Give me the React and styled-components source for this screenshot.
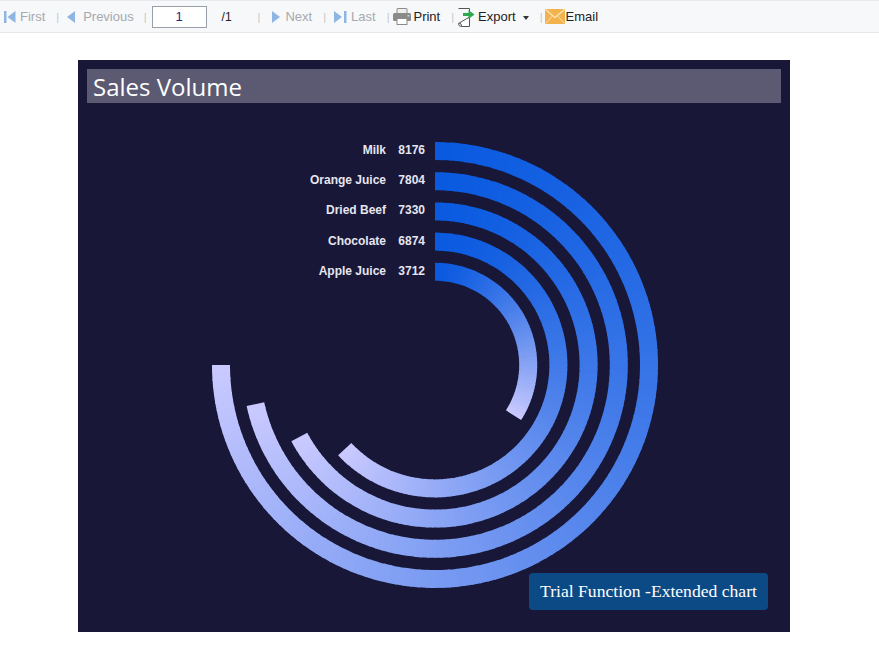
import React from "react";
import styled, { createGlobalStyle } from "styled-components";

const Global = createGlobalStyle`
  html, body { margin: 0; padding: 0; background: #ffffff; }
  body { font-family: "Liberation Sans", Arial, sans-serif; }
`;

const Toolbar = styled.div`
  height: 31px;
  display: flex;
  align-items: center;
  background: #f7f8fa;
  border-top: 1px solid #e6e8ec;
  border-bottom: 1px solid #e6e8ec;
  padding-left: 4px;
  font-family: "Liberation Sans", Arial, sans-serif;
  font-size: 13px;
`;

const Tool = styled.span`
  display: inline-flex;
  align-items: center;
  gap: ${(p) => p.$gap ?? 3}px;
  color: ${(p) => (p.$disabled ? "#a6a9ae" : "#222")};
  white-space: nowrap;
`;

const Sep = styled.span`
  color: #c4c6ca;
  font-size: 11px;
  margin: 0 ${(p) => p.$r ?? 10}px 0 ${(p) => p.$l ?? 10}px;
`;

const PageInput = styled.div`
  width: 55px;
  height: 22px;
  border: 1px solid #9aa0a8;
  background: #fff;
  color: #1a2a8a;
  font-size: 13px;
  display: flex;
  align-items: center;
  justify-content: center;
  box-sizing: border-box;
  margin-left: 4px;
`;

const PageTotal = styled.span`
  color: #222;
  font-size: 12px;
  margin-left: 15px;
  margin-right: 16px;
`;

const Caret = styled.span`
  display: inline-block;
  width: 0;
  height: 0;
  border-left: 3px solid transparent;
  border-right: 3px solid transparent;
  border-top: 4px solid #333;
  margin-left: 4px;
  margin-top: 2px;
`;

const Page = styled.div`
  padding: 27px 0 20px 78px;
`;

const Panel = styled.div`
  position: relative;
  width: 712px;
  height: 572px;
  background: #181737;
  box-sizing: border-box;
  padding: 9px;
  display: flex;
  flex-direction: column;
`;

const TitleBar = styled.div`
  height: 34px;
  background: #5b5a72;
  color: #ffffff;
  font-family: "Open Sans", "Noto Sans", sans-serif;
  font-size: 24px;
  display: flex;
  align-items: center;
  padding-left: 6px;
  flex: none;
`;

const ChartArea = styled.div`
  flex: 1;
`;

const Badge = styled.div`
  position: absolute;
  right: 22px;
  bottom: 22px;
  width: 239px;
  height: 37px;
  border-radius: 4px;
  background: #0c4a86;
  color: #ffffff;
  font-family: "Liberation Serif", "Times New Roman", serif;
  font-size: 17.6px;
  display: flex;
  align-items: center;
  justify-content: center;
`;

const data = [
  { name: "Milk", value: 8176 },
  { name: "Orange Juice", value: 7804 },
  { name: "Dried Beef", value: 7330 },
  { name: "Chocolate", value: 6874 },
  { name: "Apple Juice", value: 3712 },
];

const CX = 348;
const CY = 262;
const MAXV = 8176;
const START = [10, 90, 224];
const END = [202, 202, 255];

function pt(r, deg) {
  const a = (deg * Math.PI) / 180;
  return [CX + r * Math.sin(a), CY - r * Math.cos(a)];
}

function lerp(t) {
  const k = Math.pow(t, 1.35);
  const c = START.map((s, i) => Math.round(s + (END[i] - s) * k));
  return `rgb(${c[0]},${c[1]},${c[2]})`;
}

function Ring({ r, angle }) {
  const n = Math.max(8, Math.ceil(angle / 2));
  const step = angle / n;
  const segs = [];
  for (let i = 0; i < n; i++) {
    const a0 = i * step;
    const a1 = Math.min(angle, (i + 1) * step + (i < n - 1 ? 0.4 : 0));
    const [x0, y0] = pt(r, a0);
    const [x1, y1] = pt(r, a1);
    segs.push(
      <path
        key={i}
        d={`M${x0.toFixed(2)},${y0.toFixed(2)} A${r},${r} 0 0 1 ${x1.toFixed(2)},${y1.toFixed(2)}`}
        stroke={lerp((i + 0.5) / n)}
        strokeWidth="18"
        fill="none"
        strokeLinecap="butt"
      />
    );
  }
  return <g>{segs}</g>;
}

function Chart() {
  return (
    <svg width="694" height="529" viewBox="0 0 694 529">
      {data.map((d, i) => {
        const r = 214 - 30.2 * i;
        const angle = (d.value / MAXV) * 270;
        return <Ring key={d.name} r={r} angle={angle} />;
      })}
      {data.map((d, i) => {
        const r = 214 - 30.2 * i;
        const y = CY - r - 1;
        return (
          <g key={d.name + "l"} fontFamily="Liberation Sans, Arial, sans-serif" fontSize="12" fontWeight="bold" fill="#e6e6f0">
            <text x="299" y={y} textAnchor="end" dominantBaseline="central">{d.name}</text>
            <text x="338" y={y} textAnchor="end" dominantBaseline="central">{d.value}</text>
          </g>
        );
      })}
    </svg>
  );
}

const IconFirst = () => (
  <svg width="12" height="14" viewBox="0 0 12 14">
    <rect x="0" y="1" width="2.5" height="12" fill="#8fb6e2" />
    <path d="M11.5 1 L3.5 7 L11.5 13 Z" fill="#8fb6e2" />
  </svg>
);
const IconPrev = () => (
  <svg width="10" height="14" viewBox="0 0 10 14">
    <path d="M9 1 L1 7 L9 13 Z" fill="#8fb6e2" />
  </svg>
);
const IconNext = () => (
  <svg width="10" height="14" viewBox="0 0 10 14">
    <path d="M1 1 L9 7 L1 13 Z" fill="#8fb6e2" />
  </svg>
);
const IconLast = () => (
  <svg width="14" height="14" viewBox="0 0 14 14">
    <path d="M1 1 L9 7 L1 13 Z" fill="#8fb6e2" />
    <rect x="11" y="1" width="2.5" height="12" fill="#8fb6e2" />
  </svg>
);
const IconPrint = () => (
  <svg width="18" height="17" viewBox="0 0 18 17">
    <rect x="4" y="0.5" width="10" height="5" rx="0.5" fill="#eeeeee" stroke="#8a8a8a" />
    <rect x="0" y="5" width="18" height="8" rx="1.5" fill="#8a8a8a" />
    <rect x="4" y="10.5" width="10" height="6" fill="#ffffff" stroke="#8a8a8a" />
    <rect x="14.5" y="7" width="2" height="1.5" fill="#cfcfcf" />
  </svg>
);
const IconExport = () => (
  <svg width="18" height="21" viewBox="0 0 18 21">
    <path d="M1.5 2.5 H12.5 V6 M12.5 11 V20.5 H4.5 Q1.5 20.5 1.5 17.5 Z" fill="#ffffff" stroke="#555" />
    <path d="M1.5 17.5 Q4.5 16.5 4.5 20.5" fill="#e4e4e4" stroke="#555" />
    <path d="M6 7 H11.5 V4 L17.5 8.5 L11.5 13 V10 H6 Z" fill="#2fa84f" />
  </svg>
);
const IconEmail = () => (
  <svg width="20" height="15" viewBox="0 0 20 15">
    <rect x="0" y="0" width="20" height="15" fill="#f2b24c" />
    <path d="M0.5 0.5 L10 8.5 L19.5 0.5" fill="none" stroke="#fbe0b0" strokeWidth="1.5" />
    <path d="M0.5 14.5 L7.5 7 M19.5 14.5 L12.5 7" fill="none" stroke="#fbe0b0" strokeWidth="1" />
  </svg>
);

export default function App() {
  return (
    <>
      <Global />
      <Toolbar>
        <Tool $disabled $gap={4}><IconFirst />First</Tool>
        <Sep $l={11} $r={7}>|</Sep>
        <Tool $disabled $gap={7}><IconPrev />Previous</Tool>
        <Sep $l={10} $r={1}>|</Sep>
        <PageInput>1</PageInput>
        <PageTotal>/1</PageTotal>
        <Sep $l={10} $r={11}>|</Sep>
        <Tool $disabled $gap={4}><IconNext />Next</Tool>
        <Sep $l={11} $r={7}>|</Sep>
        <Tool $disabled $gap={4}><IconLast />Last</Tool>
        <Sep $l={11} $r={4}>|</Sep>
        <Tool $gap={2}><IconPrint />Print</Tool>
        <Sep $l={11} $r={3}>|</Sep>
        <Tool $gap={3}><IconExport />Export<Caret /></Tool>
        <Sep $l={11} $r={2}>|</Sep>
        <Tool $gap={1}><IconEmail />Email</Tool>
      </Toolbar>
      <Page>
        <Panel>
          <TitleBar>Sales Volume</TitleBar>
          <ChartArea>
            <Chart />
          </ChartArea>
          <Badge>Trial Function -Extended chart</Badge>
        </Panel>
      </Page>
    </>
  );
}
